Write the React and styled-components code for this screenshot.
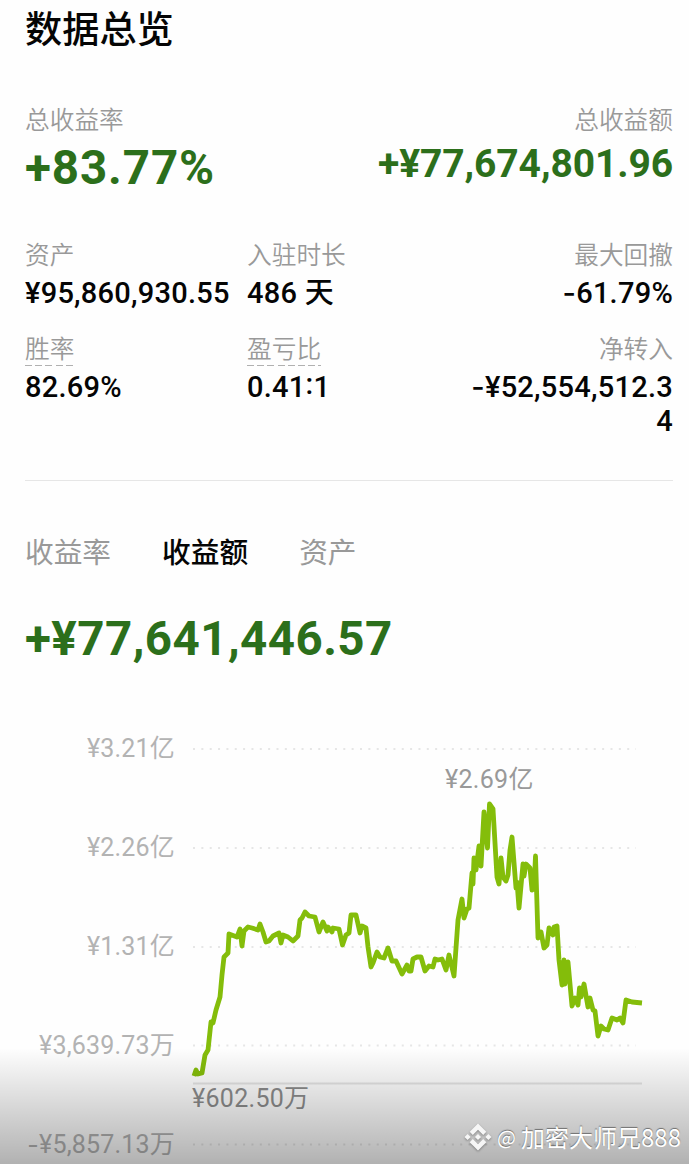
import React from "react";
import styled, { createGlobalStyle } from "styled-components";

const GlobalStyle = createGlobalStyle`
  body {
    margin: 0;
    background: #fefefe;
    overflow: hidden;
  }
  * {
    box-sizing: border-box;
  }
`;

const Page = styled.main`
  position: relative;
  width: 689px;
  height: 1164px;
  padding: 5px 16px 0 25px;
  overflow: hidden;
  background: #fefefe;
  color: #050505;
  font-family: Roboto, "Noto Sans CJK SC", sans-serif;
`;

const Title = styled.h1`
  margin: 0;
  height: 50px;
  font-size: 37.2px;
  font-weight: 500;
  line-height: 50px;
`;

const Totals = styled.section`
  display: flex;
  justify-content: space-between;
  margin-top: 48px;
  height: 98px;
`;

const Total = styled.div`
  text-align: ${props => (props.$right ? "right" : "left")};
`;

const Label = styled.div`
  height: 34px;
  color: #999;
  font-size: 24.7px;
  font-weight: 350;
  line-height: 36px;
`;

const Amount = styled.div`
  color: #2c6f1b;
  font-size: ${props => props.$size}px;
  font-weight: 700;
  letter-spacing: ${props => props.$spacing}px;
  line-height: ${props => props.$height}px;
  white-space: nowrap;
`;

const Stats = styled.section`
  display: grid;
  grid-template-columns: 222px 222px 204px;
  grid-template-rows: 94px 141px;
  margin-top: 37px;
  height: 243px;
  border-bottom: 1px solid #e6e6e6;
`;

const Stat = styled.div`
  text-align: ${props => (props.$right ? "right" : "left")};
`;

const StatLabel = styled(Label)`
  margin-bottom: 4px;
`;

const Hint = styled.span`
  display: block;
  width: fit-content;
  height: 34px;
  background: repeating-linear-gradient(
      90deg,
      #b0b0b0 0 7px,
      transparent 7px 10.2px
    )
    0 100% / 100% 1px no-repeat;
`;

const StatValue = styled.div`
  font-size: 29px;
  font-weight: 500;
  letter-spacing: 0.25px;
  line-height: 34px;
  word-break: break-all;
`;

const Minus = styled.span`
  font-family: Inter, sans-serif;
`;

const Colon = styled.span`
  position: relative;
  top: -3px;
`;

const Tabs = styled.nav`
  display: flex;
  gap: 51px;
  margin-top: 52px;
  height: 40px;
`;

const Tab = styled.button`
  padding: 0;
  border: 0;
  background: none;
  color: ${props => (props.$active ? "#050505" : "#999")};
  font-family: inherit;
  font-size: 28.7px;
  font-weight: ${props => (props.$active ? 500 : 400)};
  line-height: 40px;
`;

const Current = styled(Amount)`
  margin-top: 36px;
`;

const Chart = styled.section`
  position: relative;
  display: flex;
  gap: 18px;
  margin-top: 31px;
`;

const Axis = styled.div`
  width: 150px;
  color: #b3b3b3;
  font-size: 25px;
  font-weight: 400;
  text-align: right;
`;

const Tick = styled.div`
  display: flex;
  align-items: center;
  justify-content: flex-end;
  height: 98.8px;
  letter-spacing: 0.2px;
  line-height: 34px;
  white-space: nowrap;
`;

const Plot = styled.svg`
  display: block;
  flex: none;
  overflow: visible;
`;

const Marker = styled.span`
  position: absolute;
  left: ${props => props.$left}px;
  top: ${props => props.$top}px;
  color: ${props => props.$color};
  font-size: 25px;
  font-weight: 400;
  letter-spacing: 0.3px;
  line-height: 30px;
`;

const Shade = styled.div`
  position: absolute;
  left: 0;
  right: 0;
  bottom: 0;
  height: 116px;
  background: linear-gradient(rgba(0, 0, 0, 0), rgba(0, 0, 0, 0.3));
`;

const Watermark = styled.div`
  position: absolute;
  right: 8px;
  bottom: 10px;
  display: flex;
  align-items: center;
  gap: 5px;
  color: #fff;
  font-family: "Noto Sans CJK SC", sans-serif;
  font-size: 24px;
  line-height: 34px;
  text-shadow: 0 -1px 1px rgba(0, 0, 0, 0.45);
`;

const At = styled.span`
  font-size: 20px;
`;

const Logo = styled.svg`
  filter: drop-shadow(0 1px 1px rgba(0, 0, 0, 0.35));
`;

const ticks = ["¥3.21亿", "¥2.26亿", "¥1.31亿", "¥3,639.73万", "-¥5,857.13万"];

const gridLines = [749, 848, 947, 1045.5, 1144.5];

const points = `194,1076 196,1070 198,1074 202,1073 205,1055 208,1050 211,1022
  213,1023 216,1010 220,997 222,975 224,957 228,953 229,934 237,937 240,929
  242,946 244,931 248,927 252,928 258,930 260,924 263,932 266,942 269,941
  273,936 279,933 281,943 283,935 288,937 293,941 298,936 300,920 302,918
  305,912 309,916 315,917 319,932 323,922 327,931 328,927 332,932 333,928
  339,929 342.5,945 346,935 349,933 351,915 356,915 360,933 362,926 366,928
  368,947 371,967 373,963 377,952 380,957 384,958 388,948 392,961 396,961
  402,974 407,965 409,971 411,971 413,959 417,957 421,957 425,971 429,966
  433,967 435,959 438,960 442,959 446,970 449,955 454,976 458,920 462,899
  464,918 467,909 469,908 472,873 473,884 474,858 476,870 479,846 481,866
  484,812 487.5,848 489.5,804 493,809 497,877 499,884 501,858 503,877
  506,881 508,875 510,850 512,837 516,888 517,882 519,908 523,864 524,876
  526,864 530,868 532,890 534,888 535.5,856 538,938 541,932 544,948 547,945
  549,928 553,935 554,927 557,926 559,960 562,985 564,960 565,984 568,962
  572,1006 575,998 578,1005 579.5,988 581,997 584,984 588,1007 590,998
  593,1010 595,1011 598,1036 601,1026 604,1029 608,1030 612,1018 617,1020
  620,1018 623,1023 626,1000 632,1002 642,1003`;

// the value text may start with a minus sign, drawn wider than the Roboto hyphen
const withMinus = text =>
  text[0] === "-" ? (
    <>
      <Minus>-</Minus>
      {text.slice(1)}
    </>
  ) : (
    text
  );

const App = () => (
  <>
    <GlobalStyle />
    <Page>
      <Title>数据总览</Title>
      <Totals>
        <Total>
          <Label>总收益率</Label>
          <Amount $size={47.5} $spacing={0.9} $height={62}>
            +83.77%
          </Amount>
        </Total>
        <Total $right>
          <Label>总收益额</Label>
          <Amount $size={39} $spacing={-0.1} $height={54}>
            +¥77,674,801.96
          </Amount>
        </Total>
      </Totals>
      <Stats>
        <Stat>
          <StatLabel>资产</StatLabel>
          <StatValue>¥95,860,930.55</StatValue>
        </Stat>
        <Stat>
          <StatLabel>入驻时长</StatLabel>
          <StatValue>486 天</StatValue>
        </Stat>
        <Stat $right>
          <StatLabel>最大回撤</StatLabel>
          <StatValue>{withMinus("-61.79%")}</StatValue>
        </Stat>
        <Stat>
          <StatLabel>
            <Hint>胜率</Hint>
          </StatLabel>
          <StatValue>82.69%</StatValue>
        </Stat>
        <Stat>
          <StatLabel>
            <Hint>盈亏比</Hint>
          </StatLabel>
          <StatValue>
            0.41<Colon>:</Colon>1
          </StatValue>
        </Stat>
        <Stat $right>
          <StatLabel>净转入</StatLabel>
          <StatValue>{withMinus("-¥52,554,512.34")}</StatValue>
        </Stat>
      </Stats>
      <Tabs>
        <Tab>收益率</Tab>
        <Tab $active>收益额</Tab>
        <Tab>资产</Tab>
      </Tabs>
      <Current $size={47.5} $spacing={0.45} $height={60}>
        +¥77,641,446.57
      </Current>
      <Chart>
        <Axis>
          {ticks.map(tick => (
            <Tick key={tick}>{withMinus(tick)}</Tick>
          ))}
        </Axis>
        <Plot width="460" height="464" viewBox="193 700 460 464">
          {gridLines.map(y => (
            <line
              key={y}
              x1="193"
              x2="636"
              y1={y}
              y2={y}
              stroke="#e6e6e6"
              strokeWidth="1.8"
              strokeDasharray="2 6.35"
            />
          ))}
          <line x1="193" x2="642" y1="1083.5" y2="1083.5" stroke="#e4e4e4" strokeWidth="2" />
          <polyline
            points={points}
            fill="none"
            stroke="#84bd0a"
            strokeWidth="4.8"
            strokeLinejoin="round"
          />
        </Plot>
        <Marker $left={420} $top={65} $color="#999">
          ¥2.69亿
        </Marker>
        <Marker $left={167} $top={384} $color="#8c8c8c">
          ¥602.50万
        </Marker>
      </Chart>
      <Shade />
      <Watermark>
        <Logo width="28" height="28" viewBox="0 0 28 28" fill="#f6f6f6">
          <path d="M14 0.5 L22.3 8.8 L19.2 11.9 L14 6.7 L8.8 11.9 L5.7 8.8 Z" />
          <path d="M14 27.5 L22.3 19.2 L19.2 16.1 L14 21.3 L8.8 16.1 L5.7 19.2 Z" />
          <path d="M14 10.9 L17.1 14 L14 17.1 L10.9 14 Z" />
          <path d="M3.6 10.9 L6.7 14 L3.6 17.1 L0.5 14 Z" />
          <path d="M24.4 10.9 L27.5 14 L24.4 17.1 L21.3 14 Z" />
        </Logo>
        <At>@</At>
        <span>加密大师兄888</span>
      </Watermark>
    </Page>
  </>
);

export default App;
